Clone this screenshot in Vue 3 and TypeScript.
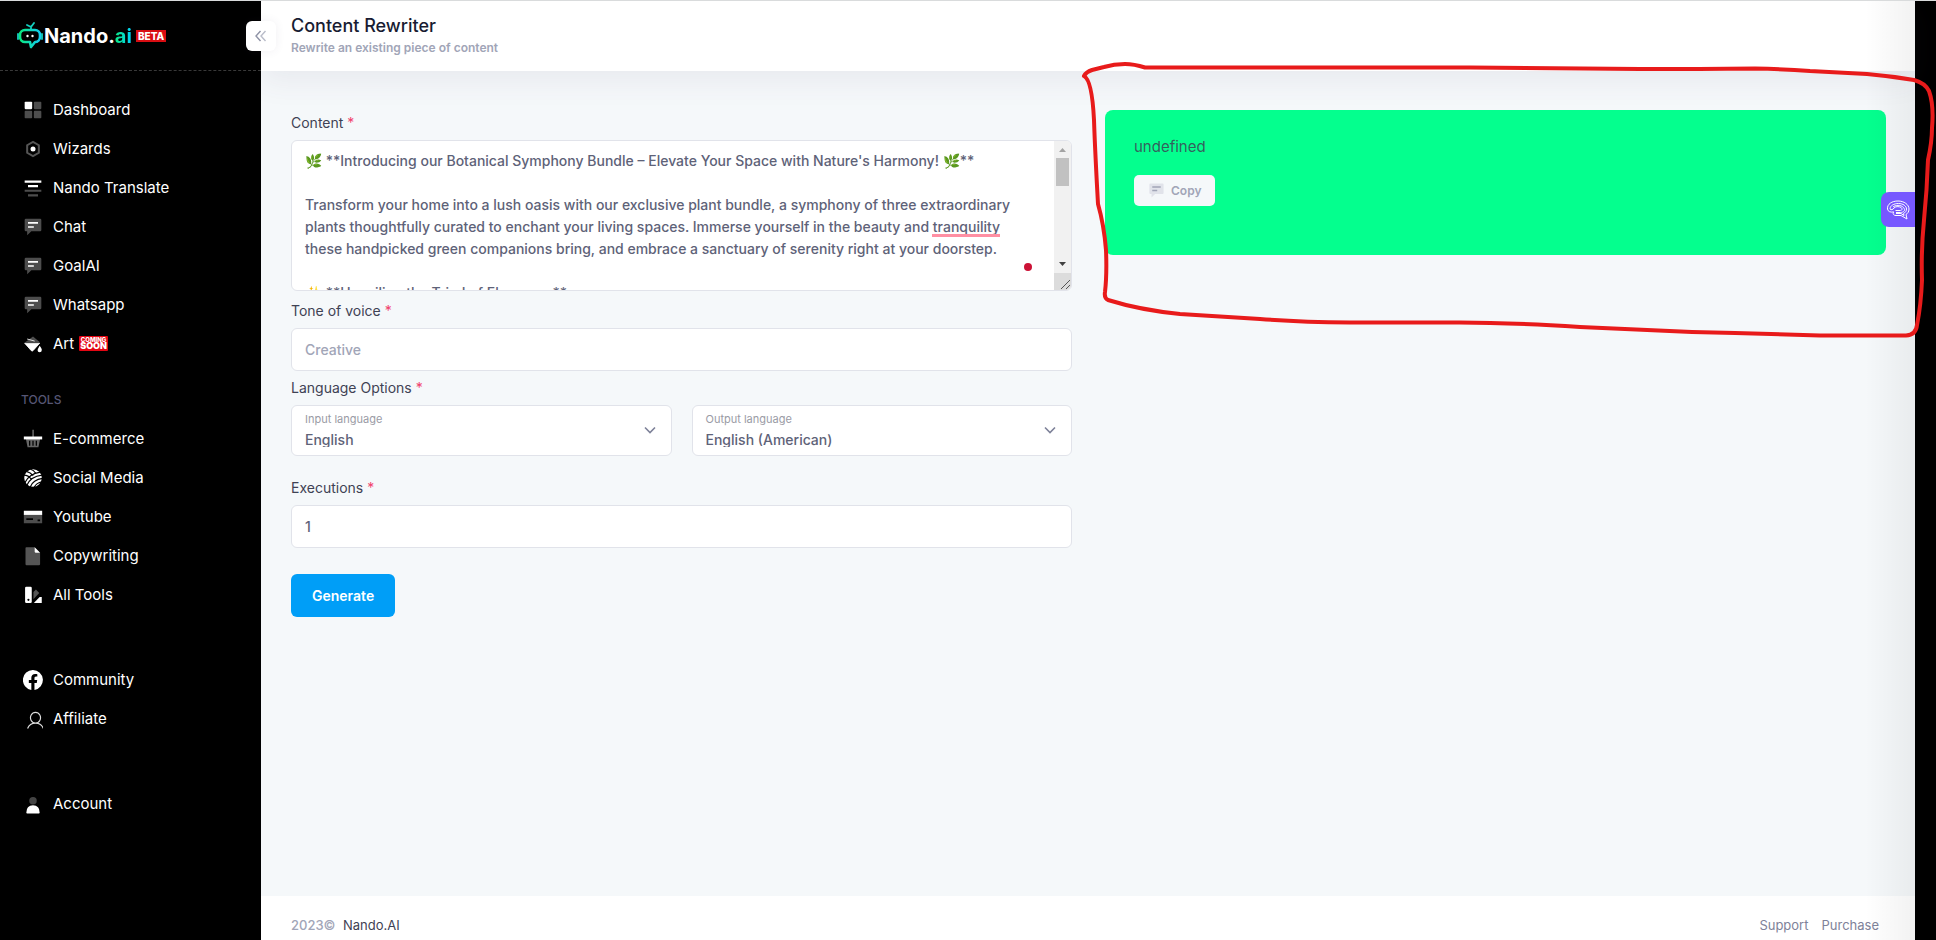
<script setup lang="ts">
import { ref } from 'vue'

interface NavItem {
  label: string
  icon: string
  soon?: boolean
}

const mainNav: NavItem[] = [
  { label: 'Dashboard', icon: 'grid' },
  { label: 'Wizards', icon: 'hex' },
  { label: 'Nando Translate', icon: 'lines' },
  { label: 'Chat', icon: 'chat' },
  { label: 'GoalAI', icon: 'chat' },
  { label: 'Whatsapp', icon: 'chat' },
  { label: 'Art', icon: 'bucket', soon: true },
]
const toolNav: NavItem[] = [
  { label: 'E-commerce', icon: 'basket' },
  { label: 'Social Media', icon: 'ball' },
  { label: 'Youtube', icon: 'card' },
  { label: 'Copywriting', icon: 'file' },
  { label: 'All Tools', icon: 'swatch' },
]
const linkNav: NavItem[] = [
  { label: 'Community', icon: 'facebook' },
  { label: 'Affiliate', icon: 'person' },
]
const accountNav: NavItem[] = [{ label: 'Account', icon: 'user' }]

const groups = [
  { key: 'primary', title: '', items: mainNav },
  { key: 'tools', title: 'TOOLS', items: toolNav },
  { key: 'outside', title: '', items: linkNav },
  { key: 'account', title: '', items: accountNav },
]

// Each icon is a list of shapes on a 24-unit grid.
interface Shape {
  d: string
  fill?: string
  stroke?: string
  width?: number
}
const dim = '#4d4d4d'
const icons: Record<string, Shape[]> = {
  grid: [
    { d: 'M3 2h7a1 1 0 0 1 1 1v7a1 1 0 0 1-1 1H3a1 1 0 0 1-1-1V3a1 1 0 0 1 1-1z', fill: '#fff' },
    { d: 'M14 2h7a1 1 0 0 1 1 1v7a1 1 0 0 1-1 1h-7a1 1 0 0 1-1-1V3a1 1 0 0 1 1-1zM3 13h7a1 1 0 0 1 1 1v7a1 1 0 0 1-1 1H3a1 1 0 0 1-1-1v-7a1 1 0 0 1 1-1zM14 13h7a1 1 0 0 1 1 1v7a1 1 0 0 1-1 1h-7a1 1 0 0 1-1-1v-7a1 1 0 0 1 1-1z', fill: dim },
  ],
  hex: [
    { d: 'M12 3.5L19 7.5V16.5L12 20.500L5 16.500V7.500Z', stroke: '#555', width: 2.4 },
    { d: 'M12 9a3 3 0 1 0 0 6a3 3 0 0 0 0-6z', fill: '#fff' },
  ],
  lines: [
    { d: 'M2 3h20v2.600H2zM6 8.500h12v2.600H6z', fill: '#fff' },
    { d: 'M2 14h20v2.600H2zM6 19.500h12v2.600H6z', fill: dim },
  ],
  chat: [
    { d: 'M3.500 2h17A1.500 1.500 0 0 1 22 3.500v12a1.500 1.500 0 0 1-1.500 1.500H10l-5 5V17H3.500A1.500 1.500 0 0 1 2 15.500v-12A1.500 1.500 0 0 1 3.500 2z', fill: dim },
    { d: 'M6 7h12M6 12h7', stroke: '#fff', width: 2 },
  ],
  bucket: [
    { d: 'M3 9.500L12 3l8 6.500z', fill: dim },
    { d: 'M5 6l9 2.500M2 11h18l-8 9q-1 1-2 0z', fill: '#fff', stroke: '#fff', width: 1 },
    { d: 'M20 14q3 4 2.500 5.500a2.500 2.500 0 0 1-5 0Q17.500 18 20 14z', fill: '#fff' },
  ],
  basket: [
    { d: 'M11.300 1h1.600v9h-1.600z', fill: '#777' },
    { d: 'M3.500 12h17l-2 10h-13z', fill: '#666' },
    { d: 'M8 14v6M12 14v6M16 14v6', stroke: '#000', width: 1.5 },
    { d: 'M1 9h22v3.500H1z', fill: '#fff' },
  ],
  ball: [
    { d: 'M12 1.500a10.500 10.500 0 1 0 0 21a10.500 10.500 0 0 0 0-21z', fill: '#fff' },
    { d: 'M1 8.500q5.500 0 9 5M4 4q5 1 8.500 5.500M2 18Q7 7 21 5M4.500 21Q9 10 23 8.500M8.500 23Q12 14 23.500 12.500M13.500 23Q16 18 23 16.500M9 1.500q4 1 6 4.500', stroke: '#000', width: 1.400 },
  ],
  card: [
    { d: 'M1 9h22v10.500H1z', fill: dim },
    { d: 'M4 14.500h8M17.500 16h3', stroke: '#000', width: 2 },
    { d: 'M1 4.500h22v5H1z', fill: '#fff' },
  ],
  file: [
    { d: 'M4 1.500h10l6.500 6.500V22a1 1 0 0 1-1 1H4a1 1 0 0 1-1-1V2.500a1 1 0 0 1 1-1z', fill: '#555' },
    { d: 'M14 1.500L20.500 8H15a1 1 0 0 1-1-1z', fill: '#fff' },
  ],
  swatch: [
    { d: 'M4 2h5a1.500 1.500 0 0 1 1.500 1.500V20A1.500 1.500 0 0 1 9 21.500H4A1.500 1.500 0 0 1 2.500 20V3.500A1.500 1.500 0 0 1 4 2z', fill: '#fff' },
    { d: 'M6.500 16.500a1.300 1.300 0 1 0 0 2.600a1.300 1.300 0 0 0 0-2.600z', fill: '#000' },
    { d: 'M12.500 8.500L15.500 5.500L19.500 9.500L12.500 17z', fill: '#555' },
    { d: 'M13 21.500L20 14.500h2.500v7z', fill: '#fff' },
  ],
  facebook: [
    { d: 'M12 0a12 12 0 0 0-2 23.850V15.500H7V12h3V9.400C10 6.400 11.800 4.700 14.500 4.700c1.300 0 2.700.25 2.700.25v2.950h-1.500c-1.500 0-1.950.9-1.950 1.850V12h3.300l-.55 3.500h-2.750v8.350A12 12 0 0 0 12 0z', fill: '#fff' },
  ],
  person: [
    { d: 'M15 4a6 6.500 0 1 0 .01 0zM5.500 23.500Q8 17 15 17t9.500 6.500', stroke: '#ddd', width: 1.400 },
  ],
  user: [
    { d: 'M12 3.500a4.500 4.500 0 1 0 0 9a4.500 4.500 0 0 0 0-9z', fill: '#444' },
    { d: 'M4 22.500Q4 13.500 12 13.500t8 9a1 1 0 0 1-1 1H5a1 1 0 0 1-1-1z', fill: '#fff' },
  ],
}

const content = ref(
  "\u{1F33F} **Introducing our Botanical Symphony Bundle – Elevate Your Space with Nature's Harmony! \u{1F33F}**\n\n" +
    'Transform your home into a lush oasis with our exclusive plant bundle, a symphony of three extraordinary plants thoughtfully curated to enchant your living spaces. Immerse yourself in the beauty and tranquility these handpicked green companions bring, and embrace a sanctuary of serenity right at your doorstep.\n\n' +
    '✨ **Unveiling the Triad of Elegance:**',
)
const tone = ref('')
const inputLanguage = ref('English')
const outputLanguage = ref('English (American)')
const executions = ref('1')
</script>

<template>
  <div class="app">
    <aside class="sidebar">
      <div class="brand">
        <svg class="robot" viewBox="0 0 26 28" aria-hidden="true">
          <defs>
            <linearGradient id="robotFill" x1="0" x2="1" y1="0" y2="0">
              <stop offset="0" stop-color="#0be881" />
              <stop offset="1" stop-color="#12cdf0" />
            </linearGradient>
          </defs>
          <path d="M8 8h10a5 5 0 0 1 5 5v2a5 5 0 0 1-5 5l-4 5-1-5H8a5 5 0 0 1-5-5v-2a5 5 0 0 1 5-5z" fill="none" stroke="url(#robotFill)" stroke-width="2.600" stroke-linejoin="round" />
          <path d="M1 12v5M25 12v5M14 8V4.500M14 5l-4-2M14 5l3-4" fill="none" stroke="#14cfc0" stroke-width="1.800" stroke-linecap="round" />
          <circle cx="10.500" cy="14" r="1.200" fill="#fff" />
          <circle cx="15.500" cy="14" r="1.200" fill="#fff" />
        </svg>
        <span class="brand-name">Nando.<span class="brand-ai">ai</span></span>
        <span class="beta">BETA</span>
      </div>
      <button class="toggle" type="button" aria-label="Collapse menu">
        <svg viewBox="0 0 14 14" width="14" height="14" aria-hidden="true">
          <path d="M6.500 2L2 7l4.500 5" fill="none" stroke="#8f93a6" stroke-width="1.400" />
          <path d="M11.500 2L7 7l4.500 5" fill="none" stroke="#b9bcc9" stroke-width="1.400" />
        </svg>
      </button>
      <nav class="nav">
        <div v-for="group in groups" :key="group.key" :class="`group-${group.key}`">
          <h2 v-if="group.title">{{ group.title }}</h2>
          <ul>
            <li v-for="item in group.items" :key="item.label">
              <a href="#">
                <svg class="icon" viewBox="0 0 24 24" aria-hidden="true">
                  <path
                    v-for="(shape, i) in icons[item.icon]"
                    :key="i"
                    :d="shape.d"
                    :fill="shape.fill ?? 'none'"
                    :stroke="shape.stroke ?? 'none'"
                    :stroke-width="shape.width ?? 0"
                  />
                </svg>
                <span>{{ item.label }}</span>
                <span v-if="item.soon" class="soon"><span>COMING</span><b>SOON</b></span>
              </a>
            </li>
          </ul>
        </div>
      </nav>
    </aside>

    <div class="page">
      <header class="header">
        <h1>Content Rewriter</h1>
        <p>Rewrite an existing piece of content</p>
      </header>

      <main class="main">
        <form class="form" @submit.prevent>
          <label class="label" for="content">Content <i>*</i></label>
          <div class="area">
            <textarea id="content" v-model="content" spellcheck="false"></textarea>
            <div class="scroll" aria-hidden="true">
              <svg viewBox="0 0 17 17"><path d="M5 11l3.500-4 3.500 4z" fill="#a3a3a3" /></svg>
              <div class="thumb"></div>
              <svg class="down" viewBox="0 0 17 17"><path d="M5 6l3.500 4L12 6z" fill="#404040" /></svg>
              <svg class="grip" viewBox="0 0 17 17"><path d="M7 16l9-9M12 16l4-4" stroke="#555" /></svg>
            </div>
            <span class="typo"></span>
            <span class="dot"></span>
          </div>

          <label class="label" for="tone">Tone of voice <i>*</i></label>
          <input id="tone" v-model="tone" class="control" type="text" placeholder="Creative" />

          <span class="label">Language Options <i>*</i></span>
          <div class="languages">
            <div class="floating">
              <label for="input-language">Input language</label>
              <select id="input-language" v-model="inputLanguage">
                <option>English</option>
              </select>
              <svg viewBox="0 0 12 8" aria-hidden="true"><path d="M1 1.500l5 5 5-5" fill="none" stroke="#7e8299" stroke-width="1.600" /></svg>
            </div>
            <div class="floating">
              <label for="output-language">Output language</label>
              <select id="output-language" v-model="outputLanguage">
                <option>English (American)</option>
              </select>
              <svg viewBox="0 0 12 8" aria-hidden="true"><path d="M1 1.500l5 5 5-5" fill="none" stroke="#7e8299" stroke-width="1.600" /></svg>
            </div>
          </div>

          <label class="label" for="executions">Executions <i>*</i></label>
          <input id="executions" v-model="executions" class="control" type="text" />

          <button class="generate" type="submit">Generate</button>
        </form>

        <section class="result">
          <p>undefined</p>
          <button class="copy" type="button">
            <svg viewBox="0 0 24 24" aria-hidden="true">
              <path :d="icons.chat[0].d" fill="#e1e3ea" />
              <path :d="icons.chat[1].d" fill="none" stroke="#a1a5b7" stroke-width="2" />
            </svg>
            Copy
          </button>
        </section>
      </main>

      <footer class="footer">
        <span class="year">2023© <a href="#">Nando.AI</a></span>
        <span class="links"><a href="#">Support</a><a href="#">Purchase</a></span>
      </footer>
      <div class="edge"></div>
      <button class="assistant" type="button" aria-label="Open assistant">
        <svg viewBox="0 0 24 20" aria-hidden="true">
          <path d="M1.500 9C1 4 6 1 12 1s11 3.500 11 8c0 3-1.500 4.500-3 5.500l1 4.500-6-3.500H10c-3 0-3.500-2.500-2-3.500-4 .5-6-.5-6.500-3z" />
          <path d="M4 9c0-3.500 4-5.500 8.500-5.500S20.500 6 20.500 9c0 2-1 3.500-3 4.500l.5 2M4 9c1 1.500 3 .5 4-1s5-2 7-.5 1 3-1 3H9.500M7 7c2-2 8-2.500 10.500.5s0 5-3 5H10M10 13.500h5l3 2" />
        </svg>
      </button>
    </div>

    <svg class="marker" viewBox="1076 56 860 290" aria-hidden="true">
      <path d="M1084 76Q1086 72 1092 70L1104 67Q1114 64 1125 64Q1134 64 1145 67.500L1470 67.500L1640 69Q1700 69 1755 68.500Q1785 69 1810 71L1867 74Q1890 76 1914 80Q1925 83 1929 91Q1934 105 1932 128Q1932 142 1928 160Q1927 190 1924 220Q1921 250 1922 280Q1921 305 1917 325Q1916 335 1906 335.500H1820L1735 333L1692 332L1580 327Q1500 322 1450 322.500H1350Q1300 322 1260 319L1180 314Q1140 310 1108 300Q1104 298 1105 292Q1107 275 1106 250Q1104 225 1098 204Q1095 150 1094 120Q1092 80 1084 76" />
    </svg>
  </div>
</template>

<style>
body {
  margin: 0;
  background: #000;
}
</style>

<style scoped>
* {
  box-sizing: border-box;
}
.app {
  position: relative;
  display: flex;
  min-height: 100vh;
  padding-right: 21px;
  overflow: hidden;
  border-top: 1px solid #d9dbdc;
  background: #000;
  font-family: Inter, "Liberation Sans", sans-serif;
  color: #3f4254;
}
a {
  color: inherit;
  text-decoration: none;
}
button,
input,
select,
textarea {
  font-family: inherit;
}
.sidebar {
  position: relative;
  z-index: 2;
  flex: 0 0 261px;
  background: #000;
  color: #fff;
}
.brand {
  display: flex;
  align-items: center;
  height: 70px;
  padding: 0 17px;
  border-bottom: 1px dashed #393939;
}
.robot {
  flex: none;
  width: 26px;
  height: 28px;
}
.brand-name {
  margin: 0 4px 0 1px;
  font-size: 20px;
  font-weight: 700;
}
.brand-ai {
  background: linear-gradient(90deg, #0be881, #00d2ff);
  background-clip: text;
  color: transparent;
}
.beta {
  padding: 0 2px;
  background: #d90d12;
  font-size: 10px;
  font-weight: 800;
  line-height: 12px;
}
.toggle {
  position: absolute;
  top: 20px;
  right: -15px;
  display: grid;
  place-items: center;
  width: 30px;
  height: 30px;
  padding: 0;
  border: 0;
  border-radius: 6px;
  background: #fff;
  box-shadow: 0 0 10px rgba(82, 63, 105, 0.08);
}
.nav {
  padding-top: 19px;
}
.nav ul {
  margin: 0;
  padding: 0;
  list-style: none;
}
.nav h2 {
  height: 39px;
  margin: 17px 0 0;
  padding-left: 21px;
  color: #565674;
  font-size: 12px;
  font-weight: 500;
  line-height: 39px;
}
.nav a {
  display: flex;
  align-items: center;
  height: 39px;
  padding-left: 23px;
  font-size: 15px;
}
.group-outside,
.group-account {
  padding-top: 46px;
}
.icon {
  flex: none;
  width: 20px;
  height: 20px;
  margin-right: 10px;
}
.soon {
  display: flex;
  flex-direction: column;
  align-items: center;
  margin-left: 5px;
  padding: 1px;
  border-radius: 1px;
  background: #e30613;
  font-size: 6px;
  font-weight: 800;
  line-height: 5px;
}
.soon b {
  font-size: 9px;
  font-weight: 900;
  line-height: 8px;
}
.page {
  position: relative;
  display: flex;
  flex: 1;
  flex-direction: column;
  min-width: 0;
  background: #f5f8fa;
}
.header {
  height: 70px;
  padding: 13px 30px 0;
  background: #fff;
  box-shadow: 0 10px 30px rgba(82, 63, 105, 0.08);
}
.header h1 {
  margin: 0;
  color: #181c32;
  font-size: 18px;
  font-weight: 500;
  line-height: 24px;
}
.header p {
  margin: 2px 0 0;
  color: #a1a5b7;
  font-size: 12px;
  font-weight: 600;
  line-height: 16px;
}
.main {
  display: grid;
  flex: 1;
  grid-template-columns: 1fr 1fr;
  gap: 33px;
  align-items: start;
  padding: 39px 29px 39px 30px;
}
.form {
  display: flex;
  flex-direction: column;
}
.label {
  height: 34px;
  padding-top: 6px;
  font-size: 14px;
  line-height: 21px;
}
.label:first-child {
  height: 30px;
  padding-top: 2px;
}
.label i {
  color: #f1416c;
  font-style: normal;
}
.area {
  position: relative;
  display: flex;
  height: 151px;
  margin-bottom: 3px;
  overflow: hidden;
  border: 1px solid #e1e3ea;
  border-radius: 6px;
  background: #fff;
}
.area textarea {
  flex: 1;
  min-width: 0;
  padding: 9px 14px 0 13px;
  border: 0;
  outline: 0;
  background: transparent;
  color: #5e6278;
  font-size: 14px;
  font-weight: 500;
  line-height: 22px;
  resize: none;
  scrollbar-width: none;
}
.scroll {
  display: flex;
  flex: 0 0 17px;
  flex-direction: column;
  background: #f1f1f1;
}
.scroll svg {
  width: 17px;
  height: 17px;
  fill: none;
}
.thumb {
  width: 13px;
  height: 28px;
  margin: 0 auto;
  background: #c1c1c1;
}
.scroll .down {
  margin-top: auto;
}
.scroll .grip {
  background: #dcdcdc;
}
.typo {
  position: absolute;
  top: 93px;
  right: 71px;
  width: 68px;
  height: 3px;
  background: #ff8fa3;
}
.dot {
  position: absolute;
  right: 39px;
  bottom: 19px;
  width: 8px;
  height: 8px;
  border-radius: 50%;
  background: #cc1236;
}
.control {
  width: 100%;
  height: 43px;
  padding: 0 13px;
  border: 1px solid #e1e3ea;
  border-radius: 6px;
  background: #fff;
  color: #5e6278;
  font-size: 14px;
  font-weight: 500;
}
.control::placeholder {
  color: #a1a5b7;
}
.languages {
  display: grid;
  grid-template-columns: 1fr 1fr;
  gap: 20px;
  margin-bottom: 15px;
}
.floating {
  position: relative;
}
.floating label {
  position: absolute;
  top: 6px;
  left: 14px;
  color: #9a9ba5;
  font-size: 11px;
  line-height: 16px;
}
.floating select {
  display: block;
  width: 100%;
  height: 51px;
  padding: 25px 13px 8px;
  border: 1px solid #e1e3ea;
  border-radius: 6px;
  appearance: none;
  background: #fff;
  color: #5e6278;
  font-size: 14px;
  font-weight: 500;
}
.floating svg {
  position: absolute;
  top: 21px;
  right: 16px;
  width: 12px;
  height: 8px;
}
.generate {
  align-self: flex-start;
  height: 43px;
  margin-top: 26px;
  padding: 0 21px;
  border: 0;
  border-radius: 6px;
  background: #009ef7;
  color: #fff;
  font-size: 14px;
  font-weight: 600;
}
.result {
  min-height: 145px;
  padding: 26px 29px;
  border-radius: 8px;
  background: #04ff8e;
}
.result p {
  margin: 0;
  color: rgba(63, 66, 84, 0.85);
  font-size: 15px;
  line-height: 22px;
}
.copy {
  display: flex;
  align-items: center;
  height: 31px;
  margin-top: 17px;
  padding: 0 14px;
  border: 0;
  border-radius: 5px;
  background: #f5f8fa;
  color: #a1a5b7;
  font-size: 12px;
  font-weight: 600;
}
.copy svg {
  width: 17px;
  height: 17px;
  margin-right: 6px;
}
.footer {
  display: flex;
  justify-content: space-between;
  height: 44px;
  padding: 20px 36px 0 30px;
  background: #fff;
  font-size: 13px;
  line-height: 18px;
}
.year {
  color: #a1a5b7;
  font-weight: 500;
}
.year a {
  margin-left: 4px;
  color: #3f4254;
  font-weight: 400;
}
.links {
  display: flex;
  gap: 13px;
  color: #7e8299;
}
.edge {
  position: absolute;
  top: 0;
  right: 0;
  bottom: 0;
  width: 50px;
  background: linear-gradient(90deg, transparent, rgba(0, 0, 0, 0.05));
  pointer-events: none;
}
.assistant {
  position: absolute;
  top: 191px;
  right: 0;
  display: grid;
  place-items: center;
  width: 34px;
  height: 35px;
  padding: 0;
  border: 0;
  border-radius: 8px 0 0 8px;
  background: #7758ff;
}
.assistant svg {
  width: 24px;
  height: 20px;
  fill: none;
  stroke: #fff;
  stroke-width: 1;
}
.marker {
  position: absolute;
  z-index: 3;
  top: 55px;
  right: 0;
  width: 860px;
  height: 290px;
  fill: none;
  stroke: #e81b1b;
  stroke-width: 4;
  stroke-linecap: round;
  stroke-linejoin: round;
  pointer-events: none;
}
</style>
